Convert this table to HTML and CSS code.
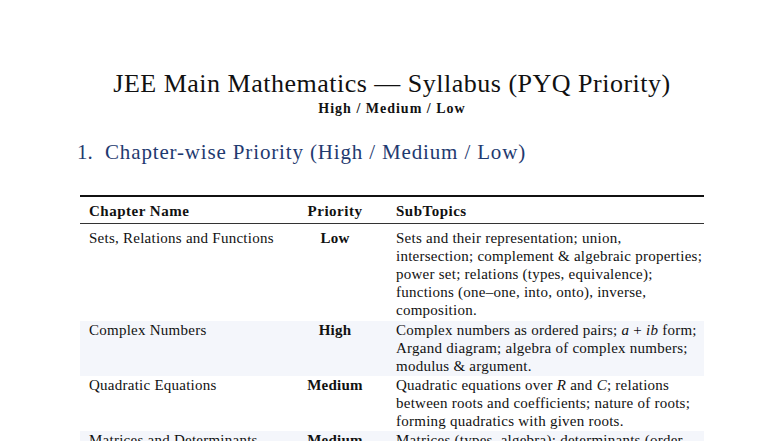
FILE: index.html
```html
<!DOCTYPE html>
<html lang="en">
<head>
<meta charset="utf-8">
<title>JEE Main Mathematics — Syllabus (PYQ Priority)</title>
<link rel="stylesheet" href="styles.css">
</head>
<body>
<main class="page">
  <header class="doc-head">
    <h1 class="doc-title">JEE Main Mathematics — Syllabus (PYQ Priority)</h1>
    <p class="doc-sub">High / Medium / Low</p>
  </header>
  <section class="section">
    <h2 class="section-title"><span class="sec-num">1.</span>Chapter-wise Priority (High / Medium / Low)</h2>
    <table class="prio-table">
      <thead>
        <tr>
          <th class="c-name">Chapter Name</th>
          <th class="c-prio">Priority</th>
          <th class="c-sub">SubTopics</th>
        </tr>
      </thead>
      <tbody>
        <tr class="first">
          <td class="c-name">Sets, Relations and Functions</td>
          <td class="c-prio">Low</td>
          <td class="c-sub">Sets and their representation; union,<br>intersection; complement &amp; algebraic properties;<br>power set; relations (types, equivalence);<br>functions (one–one, into, onto), inverse,<br>composition.</td>
        </tr>
        <tr class="shade">
          <td class="c-name">Complex Numbers</td>
          <td class="c-prio">High</td>
          <td class="c-sub">Complex numbers as ordered pairs; <i>a</i> + <i>ib</i> form;<br>Argand diagram; algebra of complex numbers;<br>modulus &amp; argument.</td>
        </tr>
        <tr>
          <td class="c-name">Quadratic Equations</td>
          <td class="c-prio">Medium</td>
          <td class="c-sub">Quadratic equations over <i>R</i> and <i>C</i>; relations<br>between roots and coefficients; nature of roots;<br>forming quadratics with given roots.</td>
        </tr>
        <tr class="shade">
          <td class="c-name">Matrices and Determinants</td>
          <td class="c-prio">Medium</td>
          <td class="c-sub">Matrices (types, algebra); determinants (order<br>up to 3); properties; adjoint &amp; inverse;<br>solution of linear equations.</td>
        </tr>
      </tbody>
    </table>
  </section>
</main>
</body>
</html>
```

FILE: styles.css
```css
html, body {
  margin: 0;
  padding: 0;
  background: #ffffff;
}
body {
  font-family: "Liberation Serif", "DejaVu Serif", serif;
  color: #111;
}
.page {
  width: 624px;
  margin: 0 auto;
  padding-top: 69px;
}
.doc-head {
  text-align: center;
}
.doc-title {
  margin: 0;
  font-size: 26px;
  letter-spacing: 0.5px;
  font-weight: normal;
  line-height: 30px;
}
.doc-sub {
  margin: 2px 0 0;
  font-size: 14px;
  letter-spacing: 1px;
  font-weight: bold;
  line-height: 16px;
}
.section-title {
  margin: 22px 0 0 -3px;
  font-size: 21px;
  letter-spacing: 0.85px;
  font-weight: normal;
  color: #1f3a70;
  line-height: 26px;
}
.sec-num {
  display: inline-block;
  width: 28px;
  letter-spacing: 0;
}
.prio-table {
  margin-top: 30px;
  width: 624px;
  border-collapse: collapse;
  font-size: 15px;
  letter-spacing: 0.25px;
  line-height: 18px;
}
.prio-table thead tr {
  border-top: 2px solid #111;
  border-bottom: 1px solid #333;
}
.prio-table th {
  font-weight: bold;
  letter-spacing: 0.5px;
  padding: 6px 0 4px;
  text-align: left;
  line-height: 16px;
}
.prio-table th.c-prio {
  text-align: center;
}
.prio-table td {
  padding: 0 0 1px;
  vertical-align: top;
}
.prio-table tr.first td {
  padding-top: 5px;
  padding-bottom: 2px;
}
.c-name {
  width: 211px;
  padding-left: 9px !important;
}
.c-prio {
  width: 70px;
  text-align: center;
}
td.c-prio {
  font-weight: bold;
}
.c-sub {
  padding-left: 26px !important;
  white-space: nowrap;
}
tr.shade td {
  background: #f4f6fb;
}
```
